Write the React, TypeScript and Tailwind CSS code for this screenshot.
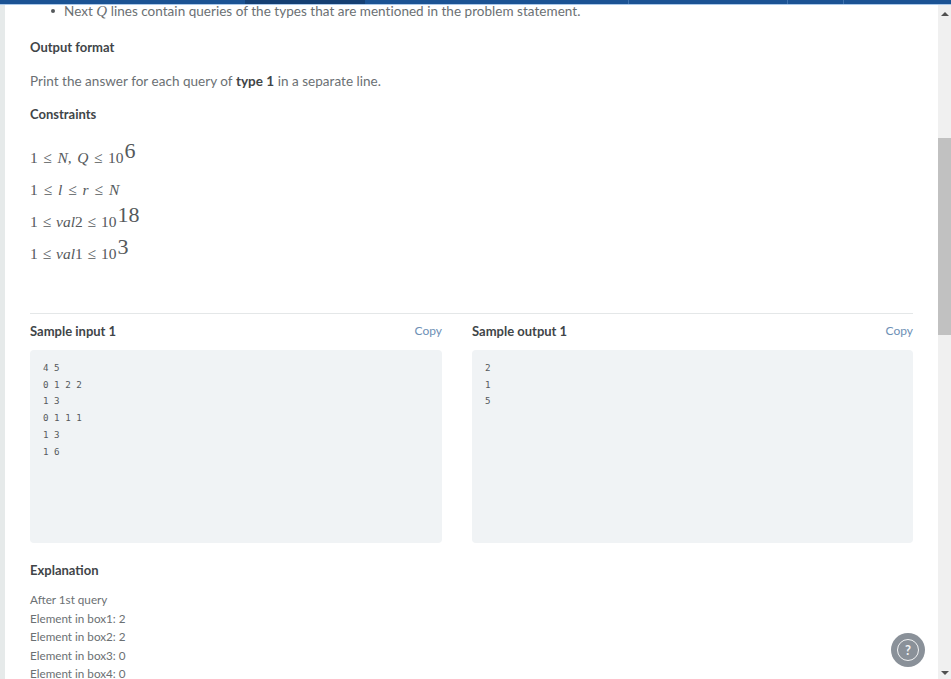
import React from 'react';

const mathFont = "font-['Liberation_Serif',serif]";

const constraints = [
  { parts: ['1 ≤ ', 'N, Q', ' ≤ 10'], exp: '6', spacing: '[word-spacing:1.7px]' },
  { parts: ['1 ≤ ', 'l', ' ≤ ', 'r', ' ≤ ', 'N'], exp: '', spacing: '[word-spacing:2px]' },
  { parts: ['1 ≤ ', 'val', '2 ≤ 10'], exp: '18', spacing: '[word-spacing:1px]' },
  { parts: ['1 ≤ ', 'val', '1 ≤ 10'], exp: '3', spacing: '[word-spacing:1px]' },
];

const Sample = ({ title, lines, className }: { title: string; lines: string[]; className: string }) => (
  <div className={className}>
    <div className="flex h-[36px] items-center justify-between">
      <span className="text-[13px] font-bold text-[#3f4548]">{title}</span>
      <span className="mb-[2px] text-[12px] text-[#6d90b5]">Copy</span>
    </div>
    <pre className="h-[193px] rounded-sm bg-[#f0f3f5] px-[13px] pb-[9px] pt-[10px] font-['DejaVu_Sans_Mono',monospace] text-[9.2px] leading-[16.7px] text-[#55595c]">
      {lines.join('\n')}
    </pre>
  </div>
);

export default function App() {
  return (
    <div className="flex h-[679px] w-[951px] flex-col overflow-hidden bg-white font-['Lato',sans-serif] text-[13px] text-[#6b7073]">
      <header className="flex h-[5px] shrink-0 border-b border-[#a9c8ea] bg-[#1b5394]">
        <div className="ml-[245px] w-[120px] bg-[#143f73]" />
        <div className="ml-[263px] w-[159px] border-l border-[#3f72ad]" />
        <div className="w-[56px] border-l border-[#3f72ad]" />
        <div className="border-l border-[#3f72ad]" />
      </header>

      <div className="relative flex min-h-0 flex-1">
        <div className="w-[5px] shrink-0 bg-[#e6eaea]" />

        <main className="min-w-0 flex-1 pl-[25px] pr-[25px]">
          <div className="flex h-[12px] items-center whitespace-nowrap pl-[21px] text-[13.5px] tracking-[0.03px]">
            <span className="mr-[9px] h-[4px] w-[4px] rounded-full bg-[#55595c]" />
            Next&nbsp;<em className={`${mathFont} text-[15px]`}>Q</em>&nbsp;lines contain queries of the types that are mentioned in the problem statement.
          </div>

          <h3 className="mt-[22px] text-[13px] font-bold leading-[16px] text-[#3f4548]">Output format</h3>
          <p className="mt-[18px] text-[13.5px] leading-[16px] tracking-[0.03px]">
            Print the answer for each query of <strong className="text-[#3f4548]">type 1</strong> in a separate line.
          </p>
          <h3 className="mt-[17px] text-[13px] font-bold leading-[16px] text-[#3f4548]">Constraints</h3>

          <div className={`mt-[16px] ${mathFont} text-[15.5px] text-[#55595c]`}>
            {constraints.map((row, i) => (
              <div key={i} className={`flex h-[32px] items-end whitespace-pre ${row.spacing}`}>
                <span className="leading-[24px]">
                  {row.parts.map((part, j) => (j % 2 === 1 ? <em key={j}>{part}</em> : <span key={j}>{part}</span>))}
                </span>
                {row.exp && <span className="ml-[1px] text-[22px] leading-[38px]">{row.exp}</span>}
              </div>
            ))}
          </div>

          <div className="mt-[47px] border-t border-[#e4e7e8]">
            <div className="flex gap-[30px]">
              <Sample title="Sample input 1" lines={['4 5', '0 1 2 2', '1 3', '0 1 1 1', '1 3', '1 6']} className="w-[412px]" />
              <Sample title="Sample output 1" lines={['2', '1', '5']} className="flex-1" />
            </div>
          </div>

          <h3 className="mt-[19px] text-[13px] font-bold leading-[16px] text-[#3f4548]">Explanation</h3>
          <div className="mt-[12px] whitespace-nowrap text-[11.7px] leading-[18.5px]">
            <p>After 1st query</p>
            <p>Element in box1: 2</p>
            <p>Element in box2: 2</p>
            <p>Element in box3: 0</p>
            <p>Element in box4: 0</p>
          </div>
        </main>

        {/* help button floats over the page */}
        <div className="absolute left-[891px] top-[628px] flex h-[34px] w-[34px] items-center justify-center rounded-full bg-[#8a9199]">
          <div className="flex h-[22px] w-[22px] items-center justify-center rounded-full border-[1.5px] border-[#f2f3f4] text-[13px] font-bold leading-none text-[#f2f3f4]">
            ?
          </div>
        </div>

        <aside className="flex w-[13px] shrink-0 flex-col bg-[#f0f0f0]">
          <div className="flex h-[12px] items-end justify-center pb-[1px]">
            <div className="h-0 w-0 border-x-[4px] border-b-[4px] border-x-transparent border-b-[#505050]" />
          </div>
          <div className="mt-[121px] h-[197px] bg-[#c1c1c1]" />
          <div className="flex-1" />
          <div className="flex h-[13px] items-center justify-center">
            <div className="h-0 w-0 border-x-[4px] border-t-[4px] border-x-transparent border-t-[#505050]" />
          </div>
        </aside>
      </div>
    </div>
  );
}
